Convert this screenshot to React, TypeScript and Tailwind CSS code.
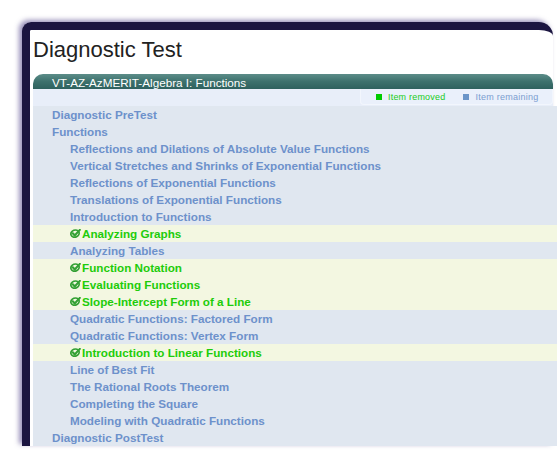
import React from "react";

type Item = { label: string; level: 1 | 2; done?: boolean };

const items: Item[] = [
  { label: "Diagnostic PreTest", level: 1 },
  { label: "Functions", level: 1 },
  { label: "Reflections and Dilations of Absolute Value Functions", level: 2 },
  { label: "Vertical Stretches and Shrinks of Exponential Functions", level: 2 },
  { label: "Reflections of Exponential Functions", level: 2 },
  { label: "Translations of Exponential Functions", level: 2 },
  { label: "Introduction to Functions", level: 2 },
  { label: "Analyzing Graphs", level: 2, done: true },
  { label: "Analyzing Tables", level: 2 },
  { label: "Function Notation", level: 2, done: true },
  { label: "Evaluating Functions", level: 2, done: true },
  { label: "Slope-Intercept Form of a Line", level: 2, done: true },
  { label: "Quadratic Functions: Factored Form", level: 2 },
  { label: "Quadratic Functions: Vertex Form", level: 2 },
  { label: "Introduction to Linear Functions", level: 2, done: true },
  { label: "Line of Best Fit", level: 2 },
  { label: "The Rational Roots Theorem", level: 2 },
  { label: "Completing the Square", level: 2 },
  { label: "Modeling with Quadratic Functions", level: 2 },
  { label: "Diagnostic PostTest", level: 1 },
];

function Check() {
  return (
    <svg width="11" height="9" viewBox="0 0 11 9" className="mr-[1px] shrink-0">
      <ellipse cx="5" cy="4.6" rx="4.2" ry="3.5" transform="rotate(-20 5 4.6)" fill="none" stroke="#33a033" strokeWidth="1.7" />
      <path d="M2.8 4.3 L4.7 6.5 L9.8 0.9" fill="none" stroke="#33a033" strokeWidth="2.1" strokeLinecap="round" strokeLinejoin="round" />
    </svg>
  );
}

export default function App() {
  return (
    <div className="w-[557px] h-[456px] bg-white overflow-hidden" style={{ fontFamily: '"Liberation Sans", Arial, sans-serif' }}>
      <div className="ml-[22px] mt-[22px] w-[531px] h-[424px] border-l-[8px] border-t-[8px] border-[#1b1540] rounded-tl-[9px] rounded-tr-[14px] shadow-[-3px_-2px_5px_rgba(70,55,130,0.55)] pl-[3px]">
        <div className="pt-[8px] h-[44px] text-[22px] leading-[24px] text-[#222]">Diagnostic Test</div>
        <div className="w-[520px] h-[15px] rounded-t-[10px] bg-gradient-to-b from-[#5c8d89] via-[#3d716d] to-[#2e615e] pl-[19px] pt-[2px] text-[11.7px] leading-[13px] text-white whitespace-nowrap">
          VT-AZ-AzMERIT-Algebra I: Functions
        </div>
        <div className="w-[520px] h-[17px] bg-[#e8eef9] flex justify-end">
          <div className="h-[16px] w-[193px] bg-[#eaf0fb] border border-t-0 border-[#f2f6fd] rounded-b-[4px] flex items-center pl-[15px] text-[9px] leading-[10px]">
            <span className="w-[6px] h-[6px] bg-[#00cc00] mr-[6px]" />
            <span className="text-[#22cc22] tracking-[0.2px]">Item removed</span>
            <span className="w-[6px] h-[6px] bg-[#6b95c8] ml-[18px] mr-[6px]" />
            <span className="text-[#7b9dd0] tracking-[0.25px]">Item remaining</span>
          </div>
        </div>
        <div className="w-[526px] h-[340px] bg-[#e0e7f0]">
          {items.map((it) => (
            <div
              key={it.label}
              className={
                "h-[17px] flex items-center text-[11.7px] font-bold leading-[17px] whitespace-nowrap " +
                (it.level === 1 ? "pl-[19px] " : "pl-[37px] ") +
                (it.done ? "bg-[#f3f7e1] text-[#1ecc0a]" : "text-[#6d91cb]")
              }
            >
              {it.done && <Check />}
              {it.label}
            </div>
          ))}
        </div>
      </div>
    </div>
  );
}
